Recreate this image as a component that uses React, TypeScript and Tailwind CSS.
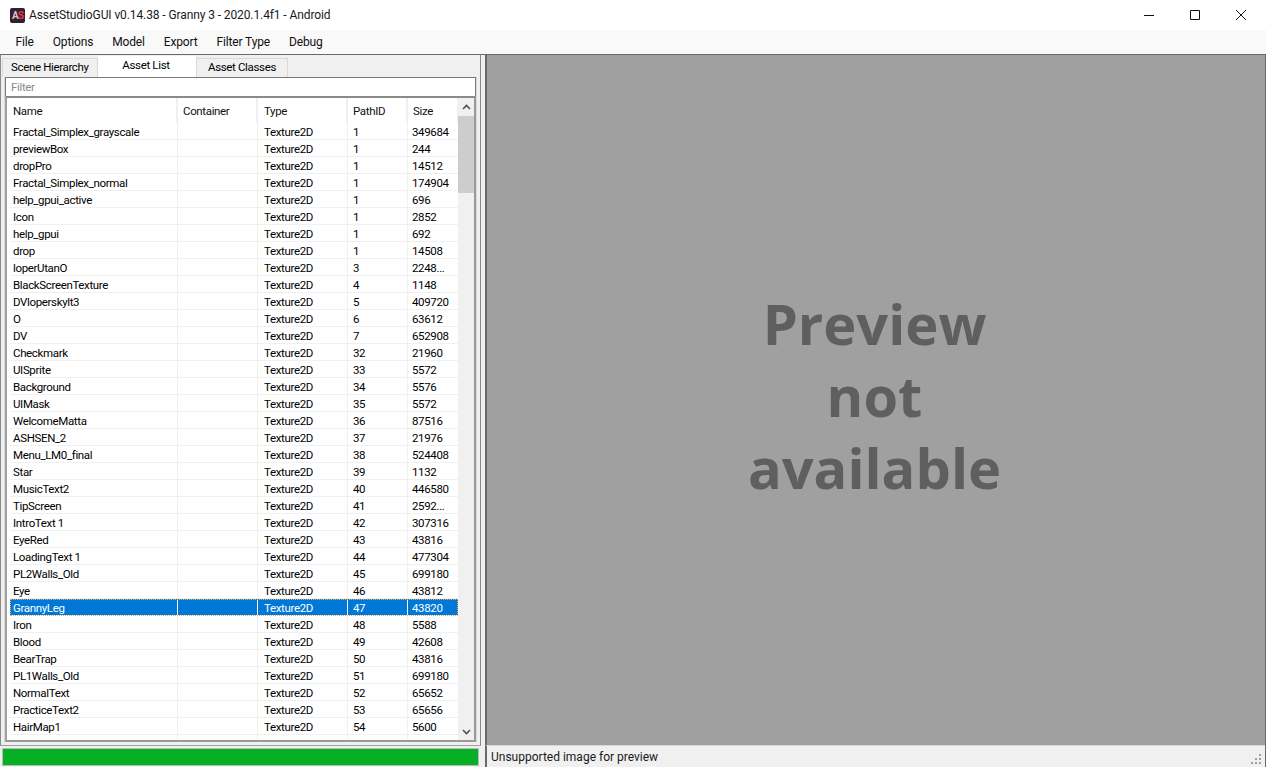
const rows: [string, string, string][] = [
  ["Fractal_Simplex_grayscale", "1", "349684"],
  ["previewBox", "1", "244"],
  ["dropPro", "1", "14512"],
  ["Fractal_Simplex_normal", "1", "174904"],
  ["help_gpui_active", "1", "696"],
  ["Icon", "1", "2852"],
  ["help_gpui", "1", "692"],
  ["drop", "1", "14508"],
  ["loperUtanO", "3", "2248..."],
  ["BlackScreenTexture", "4", "1148"],
  ["DVloperskylt3", "5", "409720"],
  ["O", "6", "63612"],
  ["DV", "7", "652908"],
  ["Checkmark", "32", "21960"],
  ["UISprite", "33", "5572"],
  ["Background", "34", "5576"],
  ["UIMask", "35", "5572"],
  ["WelcomeMatta", "36", "87516"],
  ["ASHSEN_2", "37", "21976"],
  ["Menu_LM0_final", "38", "524408"],
  ["Star", "39", "1132"],
  ["MusicText2", "40", "446580"],
  ["TipScreen", "41", "2592..."],
  ["IntroText 1", "42", "307316"],
  ["EyeRed", "43", "43816"],
  ["LoadingText 1", "44", "477304"],
  ["PL2Walls_Old", "45", "699180"],
  ["Eye", "46", "43812"],
  ["GrannyLeg", "47", "43820"],
  ["Iron", "48", "5588"],
  ["Blood", "49", "42608"],
  ["BearTrap", "50", "43816"],
  ["PL1Walls_Old", "51", "699180"],
  ["NormalText", "52", "65652"],
  ["PracticeText2", "53", "65656"],
  ["HairMap1", "54", "5600"],
]

const menus = ["File", "Options", "Model", "Export", "Filter Type", "Debug"]
const cols = "grid grid-cols-[168px_80px_90px_60px_51px]"

const Row = ({ name, id, size, selected }: { name: string; id: string; size: string; selected: boolean }) => {
  const line = selected ? "border-white" : "border-[#f0f0f0]"
  return (
    <div className={`${cols} h-[17px] border-b leading-[18px] ${line} ${selected ? "bg-[#0078d7] text-white outline-1 outline-dotted -outline-offset-1 outline-[#e8a860]" : "text-black"}`}>
      <div className={`border-r pl-[3px] whitespace-nowrap ${line}`}>{name}</div>
      <div className={`border-r ${line}`}></div>
      <div className={`border-r pl-[6px] ${line}`}>Texture2D</div>
      <div className={`border-r pl-[5px] ${line}`}>{id}</div>
      <div className={`border-r pl-[4px] ${line}`}>{size}</div>
    </div>
  )
}

const App = () => {
  return (
    <div
      className="flex flex-col w-[1266px] h-[767px] overflow-hidden bg-white text-[11.5px] tracking-[-0.35px] text-black"
      style={{ fontFamily: 'Roboto, "Noto Sans", sans-serif' }}
    >
      {/* title bar */}
      <div className="flex items-center h-[30px] shrink-0 pl-[10px]">
        <div className="flex items-center justify-center w-[15px] h-[15px] rounded-[2px] bg-[#2b2430] text-[10px] font-bold tracking-[-1px]">
          <span className="text-[#f4b8c4]">A</span>
          <span className="text-[#f03050]">S</span>
        </div>
        <span className="ml-[4px] text-[12px] text-[#1a1a1a] tracking-[-0.1px]">AssetStudioGUI v0.14.38 - Granny 3 - 2020.1.4f1 - Android</span>
        <div className="ml-auto flex items-center h-full mr-[2px]">
          <div className="flex items-center justify-center w-[46px] h-full">
            <svg width="12" height="12" viewBox="0 0 12 12"><path d="M1 6.5h10" stroke="#111" fill="none" /></svg>
          </div>
          <div className="flex items-center justify-center w-[46px] h-full">
            <svg width="12" height="12" viewBox="0 0 12 12"><path d="M1.5 1.5h9v9h-9z" stroke="#111" fill="none" /></svg>
          </div>
          <div className="flex items-center justify-center w-[46px] h-full">
            <svg width="12" height="12" viewBox="0 0 12 12"><path d="M1 1l10 10M11 1L1 11" stroke="#111" fill="none" /></svg>
          </div>
        </div>
      </div>
      {/* menu */}
      <div className="flex items-center h-[24px] shrink-0 bg-[#f9f9f9] pl-[6px]">
        {menus.map((m) => (
          <div key={m} className="px-[9.5px] text-[12px] tracking-[-0.15px] text-[#111]">{m}</div>
        ))}
      </div>
      {/* body */}
      <div className="flex flex-1 min-h-0 border-t border-t-[#696969] border-r-[1px] border-r-[#696969] bg-[#f0f0f0]">
        {/* left panel */}
        <div className="flex flex-col w-[482px] shrink-0">
          <div className="flex flex-col flex-1 min-h-0 mr-[1px] border border-t-0 border-[#a0a0a0] border-l-[#8a8a8a] border-r-[#8a8a8a]">
            {/* tabs */}
            <div className="flex h-[22px] shrink-0 pl-[1px] pt-[1px] items-end whitespace-nowrap">
              <div className="flex items-center h-[19px] w-[96px] pl-[8px] bg-[#f0f0f0] border border-b-0 border-[#d9d9d9]">Scene Hierarchy</div>
              <div className="flex items-center justify-center h-[21px] w-[98px] pr-[2px] pb-[2px] bg-white">Asset List</div>
              <div className="flex items-center justify-center h-[19px] w-[92px] bg-[#f0f0f0] border border-b-0 border-[#d9d9d9]">Asset Classes</div>
            </div>
            <div className="flex flex-col flex-1 min-h-0 mx-[3px] mb-[3px] bg-white border-x border-[#d9d9d9]">
              {/* filter */}
              <div className="flex items-center h-[19px] shrink-0 border border-[#7a7a7a] border-b-0 pl-[5px] pt-[1px] text-[#8a8a8a] bg-white">Filter</div>
              {/* list */}
              <div className="flex flex-1 min-h-0 border-2 border-[#8a8a8a] border-b-[#9a9a9a] border-r-[#9a9a9a] border-l-[#a0a0a0] overflow-hidden bg-white">
                <div className="flex-1 min-w-0 pl-[3px] overflow-hidden">
                  <div className={`${cols} h-[25px] items-center text-[#111]`}>
                    <div className="flex items-center h-full border-r-2 border-[#f0f0f0] pl-[3px] pt-[2px]">Name</div>
                    <div className="flex items-center h-full border-r-2 border-[#f0f0f0] pl-[5px] pt-[2px]">Container</div>
                    <div className="flex items-center h-full border-r-2 border-[#f0f0f0] pl-[6px] pt-[2px]">Type</div>
                    <div className="flex items-center h-full border-r-2 border-[#f0f0f0] pl-[5px] pt-[2px]">PathID</div>
                    <div className="flex items-center h-full border-r-2 border-[#f0f0f0] pl-[5px] pt-[2px]">Size</div>
                  </div>
                  {rows.map((r) => (
                    <Row key={r[0]} name={r[0]} id={r[1]} size={r[2]} selected={r[0] === "GrannyLeg"} />
                  ))}
                  <div className={`${cols} h-[20px]`}>
                    <div className="border-r border-[#f0f0f0]"></div>
                    <div className="border-r border-[#f0f0f0]"></div>
                    <div className="border-r border-[#f0f0f0]"></div>
                    <div className="border-r border-[#f0f0f0]"></div>
                    <div className="border-r border-[#f0f0f0]"></div>
                  </div>
                </div>
                {/* scrollbar */}
                <div className="flex flex-col w-[16px] shrink-0 bg-[#f0f0f0]">
                  <div className="flex items-center justify-center h-[18px]">
                    <svg width="9" height="6" viewBox="0 0 9 6"><path d="M1 5l3.5-3.5L8 5" stroke="#505050" strokeWidth="1.6" fill="none" /></svg>
                  </div>
                  <div className="h-[77px] bg-[#cdcdcd]"></div>
                  <div className="flex-1"></div>
                  <div className="flex items-center justify-center h-[17px]">
                    <svg width="9" height="6" viewBox="0 0 9 6"><path d="M1 1l3.5 3.5L8 1" stroke="#505050" strokeWidth="1.6" fill="none" /></svg>
                  </div>
                </div>
              </div>
            </div>
          </div>
          {/* progress */}
          <div className="h-[21px] shrink-0 pl-[2px] pr-[3px] pt-[2px] pb-[1px]">
            <div className="h-full border border-[#bcbcbc] bg-[#06b025]"></div>
          </div>
        </div>
        {/* right panel */}
        <div className="flex flex-col flex-1 min-w-0 border-l-[3px] border-[#f0f0f0]">
          <div className="flex flex-1 min-h-0 items-center justify-center border-l-2 border-l-[#696969] pr-[3px] bg-[#a0a0a0]">
            <div
              className="text-center text-[56px] font-bold leading-[72px] tracking-normal text-[#5f5f5f] mt-[-10px]"
              style={{ fontFamily: '"Open Sans", "Noto Sans", sans-serif' }}
            >
              Preview
              <br />
              not
              <br />
              available
            </div>
          </div>
          <div className="relative flex items-center h-[22px] shrink-0 border-l-2 border-l-[#696969] border-t border-t-[#d7d7d7] pl-[4px] bg-[#f0f0f0] text-[12px] tracking-normal text-[#1a1a1a]">
            Unsupported image for preview
            <svg className="absolute right-[3px] bottom-[2px]" width="11" height="11" viewBox="0 0 11 11" fill="#a0a0a0">
              <rect x="8" y="0" width="2" height="2" />
              <rect x="4" y="4" width="2" height="2" />
              <rect x="8" y="4" width="2" height="2" />
              <rect x="0" y="8" width="2" height="2" />
              <rect x="4" y="8" width="2" height="2" />
              <rect x="8" y="8" width="2" height="2" />
            </svg>
          </div>
        </div>
      </div>
    </div>
  )
}

export default App
